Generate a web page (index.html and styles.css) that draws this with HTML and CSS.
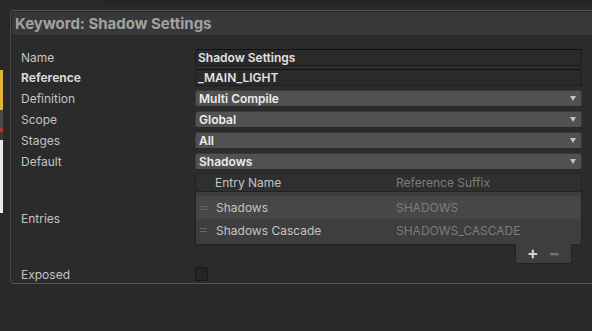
FILE: index.html
```html
<!DOCTYPE html>
<html lang="en">
<head>
  <meta charset="UTF-8">
  <title>Keyword: Shadow Settings</title>
  <link rel="stylesheet" href="styles.css">
</head>
<body>
  <div class="topbar"><div class="topbar-dark"></div></div>
  <div class="workspace">
    <div class="edge">
      <div class="edge-yellow"></div>
      <div class="edge-gap"></div>
      <div class="edge-red"></div>
      <div class="edge-gap2"></div>
      <div class="edge-white"></div>
    </div>
    <div class="panel">
      <div class="panel-header">Keyword: Shadow Settings</div>
      <div class="props">
        <div class="row first">
          <div class="label">Name</div>
          <div class="textfield">Shadow Settings</div>
        </div>
        <div class="row">
          <div class="label bold">Reference</div>
          <div class="textfield">_MAIN_LIGHT</div>
        </div>
        <div class="row">
          <div class="label">Definition</div>
          <div class="popup">Multi Compile<span class="arrow"></span></div>
        </div>
        <div class="row">
          <div class="label">Scope</div>
          <div class="popup">Global<span class="arrow"></span></div>
        </div>
        <div class="row">
          <div class="label">Stages</div>
          <div class="popup">All<span class="arrow"></span></div>
        </div>
        <div class="row">
          <div class="label">Default</div>
          <div class="popup">Shadows<span class="arrow"></span></div>
        </div>
        <div class="row entries-row">
          <div class="label">Entries</div>
          <div class="entries">
            <div class="list">
              <div class="list-head">
                <span class="col-name">Entry Name</span>
                <span class="col-ref">Reference Suffix</span>
              </div>
              <div class="list-body">
                <div class="list-item selected">
                  <span class="handle"></span>
                  <span class="col-name">Shadows</span>
                  <span class="col-ref">SHADOWS</span>
                </div>
                <div class="list-item">
                  <span class="handle"></span>
                  <span class="col-name">Shadows Cascade</span>
                  <span class="col-ref">SHADOWS_CASCADE</span>
                </div>
              </div>
            </div>
            <div class="list-footer">
              <span class="btn-add">+</span>
              <span class="btn-remove">&minus;</span>
            </div>
          </div>
        </div>
        <div class="row exposed-row">
          <div class="label">Exposed</div>
          <div class="checkbox"></div>
        </div>
      </div>
    </div>
  </div>
</body>
</html>
```

FILE: styles.css
```css
* { margin: 0; padding: 0; box-sizing: border-box; }
html, body {
  width: 592px;
  height: 331px;
  overflow: hidden;
  background: #292929;
  font-family: 'Inter', 'Noto Sans', sans-serif;
  font-size: 12px;
  color: #c4c4c4;
}
.topbar {
  height: 10px;
  display: flex;
}
.topbar-dark {
  margin-left: 103px;
  height: 3px;
  flex: 1;
  background: #232323;
}
.workspace {
  display: flex;
}
.edge {
  width: 3px;
  flex-shrink: 0;
  margin-right: 7px;
  padding-top: 60px;
  display: flex;
  flex-direction: column;
}
.edge-yellow { height: 40px; background: #e2b43c; }
.edge-gap { height: 18px; background: #4a4a4a; }
.edge-red { height: 4px; background: #c0302a; }
.edge-gap2 { height: 8px; background: #3a3a3a; }
.edge-white { height: 73px; background: #e8e8e8; }

.panel {
  width: 600px;
  flex-shrink: 0;
  border: 1px solid #555;
  border-right: none;
  border-left-color: #464646;
  border-radius: 4px 0 0 4px;
  background: #2b2b2b;
  padding: 1px 0 2px 1px;
}
.panel-header {
  height: 23px;
  line-height: 23px;
  background: #383838;
  border-radius: 3px 0 0 3px;
  padding-left: 3px;
  font-size: 15px;
  font-weight: 700;
  color: #a2a2a2;
}
.props {
  padding: 14px 0 0 9px;
  display: flex;
  flex-direction: column;
  gap: 4px;
}
.row {
  display: flex;
  align-items: center;
  height: 17px;
}
.row.first {
  margin-bottom: -1px;
}
.label {
  width: 174px;
  flex-shrink: 0;
  color: #c4c4c4;
}
.label.bold {
  font-weight: 700;
  color: #d8d8d8;
}
.textfield, .popup {
  width: 387px;
  height: 17px;
  line-height: 15px;
  padding-left: 2px;
  border-radius: 3px;
  font-weight: 600;
  color: #e2e2e2;
}
.textfield {
  background: #2a2a2a;
  border: 1px solid #1f1f1f;
  border-top-color: #121212;
}
.popup {
  position: relative;
  background: #515151;
  border: 1px solid #3a3a3a;
  border-bottom-color: #2a2a2a;
  padding-left: 3px;
  color: #ececec;
}
.arrow {
  position: absolute;
  right: 5px;
  top: 5px;
  border-left: 3.5px solid transparent;
  border-right: 3.5px solid transparent;
  border-top: 5px solid #c4c4c4;
}

.entries-row {
  height: auto;
  margin-top: -1px;
}
.entries {
  width: 387px;
  display: flex;
  flex-direction: column;
  align-items: flex-end;
}
.list {
  width: 387px;
  border: 1px solid #232323;
  border-radius: 3px;
  background: #3e3e3e;
  overflow: hidden;
}
.list-head {
  height: 18px;
  display: flex;
  align-items: center;
  background: #2f2f2f;
  border-bottom: 1px solid #232323;
}
.list-head .col-name {
  width: 200px;
  padding-left: 19px;
}
.col-ref {
  color: #7c7c7c;
}
.list-body {
  padding: 4px 0 3px;
}
.list-item {
  height: 22px;
  display: flex;
  align-items: center;
}
.list-item.selected {
  height: 23px;
  background: #474747;
}
.handle {
  width: 7px;
  height: 4px;
  margin: 0 9px 0 4px;
  border-top: 1px solid #6a6a6a;
  border-bottom: 1px solid #6a6a6a;
}
.list-item .col-name {
  width: 180px;
}
.list-footer {
  width: 57px;
  height: 20px;
  margin-right: 10px;
  margin-top: -1px;
  background: #3e3e3e;
  border: 1px solid #232323;
  border-top: none;
  border-radius: 0 0 3px 3px;
  display: flex;
  align-items: center;
  justify-content: space-around;
  padding: 0 6px;
  font-size: 17px;
  font-weight: 700;
  line-height: 1;
}
.btn-add {
  color: #d0d0d0;
}
.btn-remove {
  color: #747474;
}
.exposed-row {
  height: 14px;
  margin-top: -1px;
}
.checkbox {
  width: 13px;
  height: 14px;
  background: #242424;
  border: 1px solid #181818;
  border-radius: 2px;
}
```
